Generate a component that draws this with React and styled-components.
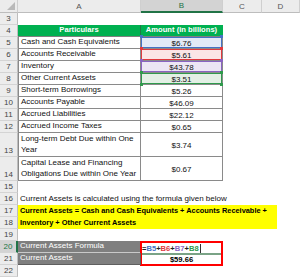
import styled, { createGlobalStyle } from 'styled-components';

const GlobalStyle = createGlobalStyle`
  body {
    margin: 0;
    background: #fff;
    font-family: "Liberation Sans", Arial, sans-serif;
  }
`;

const refColors = {
  blue: { line: '#4472c4', fill: '#e2e9f6' },
  red: { line: '#e0393e', fill: '#fbe5e6' },
  purple: { line: '#8a64c2', fill: '#ece6f4' },
  green: { line: '#2f9a4c', fill: '#e3f0e5' },
};

const items = [
  { n: 5, label: ['Cash and Cash Equivalents'], value: '$6.76', ref: 'blue' },
  { n: 6, label: ['Accounts Receivable'], value: '$5.61', ref: 'red' },
  { n: 7, label: ['Inventory'], value: '$43.78', ref: 'purple' },
  { n: 8, label: ['Other Current Assets'], value: '$3.51', ref: 'green' },
  { n: 9, label: ['Short-term Borrowings'], value: '$5.26' },
  { n: 10, label: ['Accounts Payable'], value: '$46.09' },
  { n: 11, label: ['Accrued Liabilities'], value: '$22.12' },
  { n: 12, label: ['Accrued Income Taxes'], value: '$0.65' },
  { n: 13, label: ['Long-term Debt Due within One', 'Year'], value: '$3.74' },
  { n: 14, label: ['Capital Lease and Financing', 'Obligations Due within One Year'], value: '$0.67' },
];

function App() {
  return (
    <>
      <GlobalStyle />
      <Sheet>
        <Corner>
          <svg width="8" height="8" viewBox="0 0 8 8">
            <polygon points="8,0 8,8 0,8" fill="#b9b9b9" />
          </svg>
        </Corner>
        <ColHead>A</ColHead>
        <ColHead $active>B</ColHead>
        <ColHead>C</ColHead>
        <ColHead>D</ColHead>

        <RowHead>3</RowHead>
        <Blank $span={4} />

        <RowHead>4</RowHead>
        <TitleCell>Particulars</TitleCell>
        <TitleCell $last>Amount (in billions)</TitleCell>
        <Blank $span={2} />

        {items.map((it) => (
          <Row key={it.n} it={it} />
        ))}

        <RowHead>15</RowHead>
        <Blank $span={4} />

        <RowHead>16</RowHead>
        <Text $span={4}>Current Assets is calculated using the formula given below</Text>

        <RowHead>17</RowHead>
        <NoteArea>
          <Note>
            <span>Current Assets = Cash and Cash Equivalents + Accounts Receivable +</span>
            <span>Inventory + Other Current Assets</span>
          </Note>
        </NoteArea>
        <RowHead>18</RowHead>

        <RowHead>19</RowHead>
        <Blank $span={4} />

        <RowHead $active>20</RowHead>
        <DarkCell $top>Current Assets Formula</DarkCell>
        <FormulaBox>
          <FormulaLine>
            =<Ref $c="blue">B5</Ref>+<Ref $c="red">B6</Ref>+<Ref $c="purple">B7</Ref>+<Ref $c="green">B8</Ref>
            <Caret />
          </FormulaLine>
          <Total>$59.66</Total>
        </FormulaBox>
        <Blank $span={2} />

        <RowHead>21</RowHead>
        <DarkCell>Current Assets</DarkCell>
        <Blank $span={2} />

        <RowHead>22</RowHead>
        <Blank $span={4} />
      </Sheet>
    </>
  );
}

function Row({ it }) {
  const tall = it.label.length > 1;
  return (
    <>
      <RowHead>{it.n}</RowHead>
      <LabelCell $tall={tall}>
        {it.label.map((l) => (
          <span key={l}>{l}</span>
        ))}
      </LabelCell>
      <ValueCell $ref={it.ref}>{it.value}</ValueCell>
      <Blank $span={2} />
    </>
  );
}

const Sheet = styled.div`
  display: grid;
  grid-template-columns: 18px 123px 82px 39px 38px;
  grid-template-rows: 13px repeat(10, 12px) 24px 24px repeat(8, 12px);
  width: 300px;
  height: 277px;
  overflow: hidden;
  font-size: 8px;
  color: #111;
`;

const Corner = styled.div`
  box-sizing: border-box;
  background: #ececec;
  border-right: 1px solid #cfcfcf;
  border-bottom: 1px solid #bdbdbd;
  display: flex;
  align-items: flex-end;
  justify-content: flex-end;
  padding: 0 2px 2px 0;
`;

const ColHead = styled.div`
  box-sizing: border-box;
  background: ${(p) => (p.$active ? '#d3d3d3' : '#ececec')};
  color: ${(p) => (p.$active ? '#217346' : '#555')};
  border-right: 1px solid #cfcfcf;
  border-bottom: ${(p) => (p.$active ? '2px solid #217346' : '1px solid #bdbdbd')};
  display: flex;
  align-items: center;
  justify-content: center;
  font-size: 8px;
`;

const RowHead = styled.div`
  box-sizing: border-box;
  grid-column: 1;
  background: ${(p) => (p.$active ? '#d3d3d3' : '#ececec')};
  color: ${(p) => (p.$active ? '#217346' : '#444')};
  border-right: ${(p) => (p.$active ? '2px solid #217346' : '1px solid #bdbdbd')};
  border-bottom: 1px solid #d4d4d4;
  display: flex;
  align-items: flex-end;
  justify-content: center;
  padding-bottom: 1px;
  font-size: 8px;
`;

const Blank = styled.div`
  grid-column: span ${(p) => p.$span || 1};
`;

const Text = styled.div`
  grid-column: span ${(p) => p.$span || 1};
  display: flex;
  align-items: flex-end;
  padding: 0 0 2px 2px;
  white-space: nowrap;
`;

const TitleCell = styled.div`
  box-sizing: border-box;
  background: #00b050;
  color: #fff;
  font-weight: bold;
  font-size: 7.6px;
  display: flex;
  align-items: flex-end;
  justify-content: center;
  padding-bottom: 2px;
  white-space: nowrap;
  border-right: 1px solid ${(p) => (p.$last ? '#00b050' : '#1e7a43')};
  border-bottom: 1px solid #7f7f7f;
`;

const LabelCell = styled.div`
  box-sizing: border-box;
  display: flex;
  flex-direction: column;
  justify-content: flex-end;
  padding: 0 0 1px 2px;
  line-height: 12px;
  white-space: nowrap;
  border-left: 1px solid #8a8a8a;
  border-right: 1px solid #8a8a8a;
  border-bottom: 1px solid #8a8a8a;

  span {
    height: ${(p) => (p.$tall ? '11.5px' : 'auto')};
    line-height: ${(p) => (p.$tall ? '11px' : '10px')};
  }
`;

const ValueCell = styled.div`
  box-sizing: border-box;
  position: relative;
  display: flex;
  align-items: center;
  justify-content: center;
  padding-top: 1px;
  background: ${(p) => (p.$ref ? refColors[p.$ref].fill : '#fff')};
  border-right: 1px solid #8a8a8a;
  border-bottom: 1px solid #8a8a8a;
  box-shadow: ${(p) => (p.$ref ? `inset 0 0 0 1px ${refColors[p.$ref].line}` : 'none')};

  &::before {
    content: '';
    display: ${(p) => (p.$ref ? 'block' : 'none')};
    position: absolute;
    left: -1px;
    top: -2px;
    width: 3px;
    height: 3px;
    background: ${(p) => (p.$ref ? refColors[p.$ref].line : 'transparent')};
    box-shadow: ${(p) =>
      p.$ref
        ? `80px 0 0 ${refColors[p.$ref].line}, 0 12px 0 ${refColors[p.$ref].line}, 80px 12px 0 ${refColors[p.$ref].line}`
        : 'none'};
    z-index: 2;
  }
`;

const NoteArea = styled.div`
  grid-column: 2 / 6;
  grid-row: span 2;
  display: flex;
`;

const Note = styled.div`
  width: 257px;
  background: #ffff00;
  display: flex;
  flex-direction: column;
  justify-content: center;
  padding-left: 2px;
  font-weight: bold;
  font-size: 7.4px;
  line-height: 12px;
  white-space: nowrap;
  color: #000;
`;

const DarkCell = styled.div`
  box-sizing: border-box;
  background: #7f7f7f;
  color: #fff;
  display: flex;
  align-items: flex-end;
  padding: 0 0 2px 2px;
  white-space: nowrap;
  border-right: 1px solid #5f5f5f;
  border-bottom: 1px solid ${(p) => (p.$top ? '#c9c9c9' : '#5f5f5f')};
`;

const FormulaBox = styled.div`
  grid-row: span 2;
  box-sizing: border-box;
  margin: 0 0 -1px -1px;
  border: 2px solid #ff0000;
  display: flex;
  flex-direction: column;
  background: #fff;
`;

const FormulaLine = styled.div`
  flex: 1;
  display: flex;
  align-items: center;
  padding: 1px 0 0 0;
  border-bottom: 2px solid #7aa386;
  white-space: nowrap;
  font-weight: bold;
  font-size: 7.6px;
  color: #222;
`;

const Ref = styled.span`
  color: ${(p) => refColors[p.$c].line};
`;

const Caret = styled.span`
  display: inline-block;
  width: 1px;
  height: 9px;
  margin-left: 1px;
  background: #333;
`;

const Total = styled.div`
  flex: 1;
  display: flex;
  align-items: center;
  justify-content: center;
  font-weight: bold;
  font-size: 7.6px;
  color: #000;
`;

export default App;
